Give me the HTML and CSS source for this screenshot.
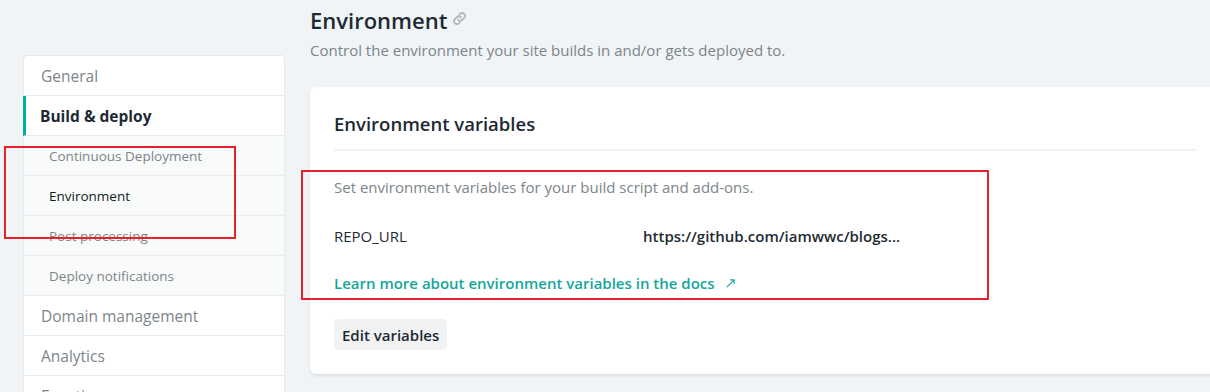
FILE: index.html
```html
<!DOCTYPE html>
<html lang="en">
<head>
    <meta charset="UTF-8" />
    <title>Environment - Site settings</title>
    <link rel="stylesheet" href="styles.css">
</head>
<body>

<div class="page">
    <aside class="sidebar">
        <a class="nav-item" href="#">General</a>
        <a class="nav-item active" href="#">Build &amp; deploy</a>
        <a class="nav-sub" href="#">Continuous Deployment</a>
        <a class="nav-sub current" href="#">Environment</a>
        <a class="nav-sub" href="#">Post processing</a>
        <a class="nav-sub" href="#">Deploy notifications</a>
        <a class="nav-item" href="#">Domain management</a>
        <a class="nav-item" href="#">Analytics</a>
        <a class="nav-item" href="#">Functions</a>
    </aside>

    <main class="main-content">
        <h1 class="page-title">
            Environment
            <svg class="anchor-icon" viewBox="0 0 16 16" width="15" height="15">
                <path d="M6.6 9.4a3 3 0 0 0 4.2 0l2.4-2.4a3 3 0 0 0-4.2-4.2L7.8 3.9" fill="none" stroke="#b2b8bc" stroke-width="2" stroke-linecap="round"/>
                <path d="M9.4 6.6a3 3 0 0 0-4.2 0L2.8 9a3 3 0 0 0 4.2 4.2l1.1-1.1" fill="none" stroke="#b2b8bc" stroke-width="2" stroke-linecap="round"/>
            </svg>
        </h1>
        <p class="page-desc">Control the environment your site builds in and/or gets deployed to.</p>

        <div class="card">
            <h2>Environment variables</h2>
            <p class="card-desc">Set environment variables for your build script and add-ons.</p>
            <div class="var-row">
                <span class="var-key">REPO_URL</span>
                <span class="var-value">https://github.com/iamwwc/blogs...</span>
            </div>
            <a class="docs-link" href="#">
                Learn more about environment variables in the docs
                <svg class="ext-icon" viewBox="0 0 12 12" width="11" height="11">
                    <path d="M2 10L10 2M5.5 2H10v4.5" fill="none" stroke="#14a69a" stroke-width="1.2"/>
                </svg>
            </a>
            <button class="btn">Edit variables</button>
        </div>
    </main>
</div>

<div class="mark mark-nav"></div>
<div class="mark mark-vars"></div>

</body>
</html>
```

FILE: styles.css
```css
* {
  margin: 0;
  padding: 0;
  box-sizing: border-box;
  font-family: 'Open Sans', sans-serif;
}

body {
  background: #f1f4f7;
  color: #1e2a32;
  height: 392px;
  overflow: hidden;
}

.page {
  display: flex;
  gap: 25px;
  padding-left: 23px;
}

.sidebar {
  width: 262px;
  margin-top: 55px;
  background: #fff;
  border: 1px solid #e6e9eb;
  border-bottom: none;
  border-radius: 4px 4px 0 0;
  display: flex;
  flex-direction: column;
  flex-shrink: 0;
}

.nav-item,
.nav-sub {
  display: flex;
  align-items: center;
  height: 40px;
  text-decoration: none;
  border-bottom: 1px solid #e9ebec;
}

.nav-item {
  padding-left: 17px;
  font-size: 15.5px;
  color: #7d8589;
}

.nav-item.active {
  color: #1e2a32;
  font-weight: 700;
  border-left: 3px solid #00ad9f;
  padding-left: 14px;
  margin-left: -1px;
}

.nav-sub {
  padding-left: 25px;
  font-size: 13.5px;
  color: #7d8589;
  background: #f9fafa;
}

.nav-sub.current {
  color: #0e1e25;
}

.main-content {
  flex: 1;
  min-width: 0;
}

.page-title {
  font-size: 22px;
  font-weight: 600;
  line-height: 40px;
  color: #1e2a32;
  display: flex;
  align-items: center;
  gap: 5px;
}

.anchor-icon {
  margin-top: -4px;
}

.page-desc {
  font-size: 15px;
  color: #7d8589;
  line-height: 20px;
}

.card {
  margin-top: 27px;
  width: 911px;
  background: #fff;
  border-radius: 6px;
  padding: 24px;
  box-shadow: 0 2px 3px rgba(0, 0, 0, 0.08);
}

.card h2 {
  font-size: 18.5px;
  font-weight: 600;
  line-height: 26px;
  padding-bottom: 12px;
  border-bottom: 2px solid #f1f2f3;
}

.card-desc {
  margin-top: 26px;
  font-size: 15px;
  line-height: 20px;
  color: #7d8589;
}

.var-row {
  display: flex;
  margin-top: 29px;
  font-size: 15px;
  line-height: 20px;
}

.var-key {
  width: 309px;
  color: #1e2a32;
}

.var-value {
  font-weight: 600;
  color: #1e2a32;
}

.docs-link {
  display: flex;
  align-items: center;
  gap: 10px;
  margin-top: 27px;
  font-size: 15px;
  line-height: 20px;
  font-weight: 600;
  color: #14a69a;
  text-decoration: none;
}

.btn {
  display: block;
  margin-top: 26px;
  padding: 0 8px;
  height: 31px;
  border: none;
  border-radius: 4px;
  background: #f0f2f4;
  color: #1e2a32;
  font-size: 15px;
  font-weight: 600;
}

/* red annotation boxes drawn over the screenshot */
.mark {
  position: absolute;
  border: 2px solid #e8202a;
}

.mark-nav {
  left: 4px;
  top: 146px;
  width: 232px;
  height: 93px;
}

.mark-vars {
  left: 301px;
  top: 170px;
  width: 688px;
  height: 130px;
}
```
